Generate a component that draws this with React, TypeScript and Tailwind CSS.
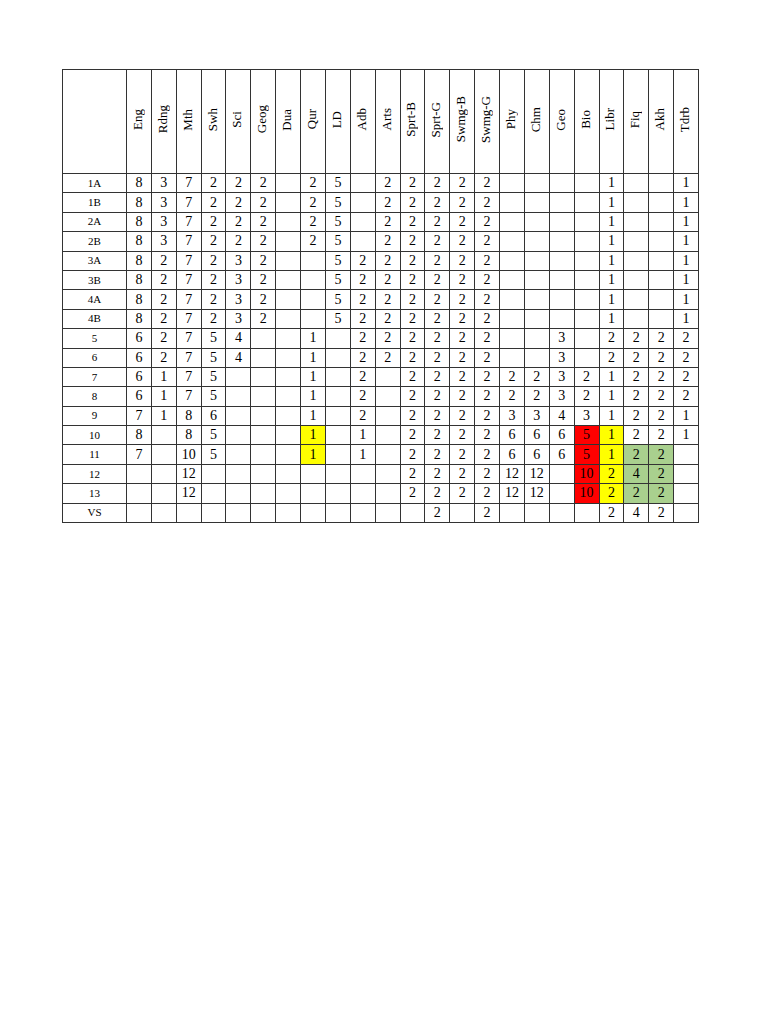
import React from 'react';

const subjects = [
  'Eng', 'Rdng', 'Mth', 'Swh', 'Sci', 'Geog', 'Dua', 'Qur', 'LD', 'Adb', 'Arts',
  'Sprt-B', 'Sprt-G', 'Swmg-B', 'Swmg-G', 'Phy', 'Chm', 'Geo', 'Bio', 'Libr', 'Fiq', 'Akh', 'Tdrb',
];

// y = yellow, r = red, g = green
type Cell = string | [string, 'y' | 'r' | 'g'];

const rowA: Cell[] = ['8', '3', '7', '2', '2', '2', '', '2', '5', '', '2', '2', '2', '2', '2', '', '', '', '', '1', '', '', '1'];
const rowB: Cell[] = ['8', '2', '7', '2', '3', '2', '', '', '5', '2', '2', '2', '2', '2', '2', '', '', '', '', '1', '', '', '1'];
const rowC: Cell[] = ['6', '2', '7', '5', '4', '', '', '1', '', '2', '2', '2', '2', '2', '2', '', '', '3', '', '2', '2', '2', '2'];
const rowD: Cell[] = ['6', '1', '7', '5', '', '', '', '1', '', '2', '', '2', '2', '2', '2', '2', '2', '3', '2', '1', '2', '2', '2'];

const rows: { label: string; cells: Cell[] }[] = [
  { label: '1A', cells: rowA },
  { label: '1B', cells: rowA },
  { label: '2A', cells: rowA },
  { label: '2B', cells: rowA },
  { label: '3A', cells: rowB },
  { label: '3B', cells: rowB },
  { label: '4A', cells: rowB },
  { label: '4B', cells: rowB },
  { label: '5', cells: rowC },
  { label: '6', cells: rowC },
  { label: '7', cells: rowD },
  { label: '8', cells: rowD },
  { label: '9', cells: ['7', '1', '8', '6', '', '', '', '1', '', '2', '', '2', '2', '2', '2', '3', '3', '4', '3', '1', '2', '2', '1'] },
  { label: '10', cells: ['8', '', '8', '5', '', '', '', ['1', 'y'], '', '1', '', '2', '2', '2', '2', '6', '6', '6', ['5', 'r'], ['1', 'y'], '2', '2', '1'] },
  { label: '11', cells: ['7', '', '10', '5', '', '', '', ['1', 'y'], '', '1', '', '2', '2', '2', '2', '6', '6', '6', ['5', 'r'], ['1', 'y'], ['2', 'g'], ['2', 'g'], ''] },
  { label: '12', cells: ['', '', '12', '', '', '', '', '', '', '', '', '2', '2', '2', '2', '12', '12', '', ['10', 'r'], ['2', 'y'], ['4', 'g'], ['2', 'g'], ''] },
  { label: '13', cells: ['', '', '12', '', '', '', '', '', '', '', '', '2', '2', '2', '2', '12', '12', '', ['10', 'r'], ['2', 'y'], ['2', 'g'], ['2', 'g'], ''] },
  { label: 'VS', cells: ['', '', '', '', '', '', '', '', '', '', '', '', '2', '', '2', '', '', '', '', '2', '4', '2', ''] },
];

const fills = {
  y: 'bg-[#ffff00]',
  r: 'bg-[#ff0000]',
  g: 'bg-[#a9d08e]',
};

const cellBase = 'border-r border-b border-[#333] flex items-center justify-center';

export default function App() {
  return (
    <div className="min-h-screen w-full bg-white pt-[69px] pl-[62px] font-['Liberation_Serif',serif] text-black">
      <div className="grid w-[637px] h-[454px] grid-cols-[64px_repeat(23,minmax(0,1fr))] grid-rows-[104px_repeat(18,minmax(0,1fr))] border-t border-l border-[#333]">
        <div className={cellBase} />
        {subjects.map(s => (
          <div key={s} className={`${cellBase} pb-[4px]`}>
            <span className="[writing-mode:vertical-rl] rotate-180 text-[13px] leading-none pl-[3px]">{s}</span>
          </div>
        ))}
        {rows.map(row => (
          <React.Fragment key={row.label}>
            <div className={`${cellBase} text-[11px] leading-none`}>{row.label}</div>
            {row.cells.map((c, i) => {
              const value = typeof c === 'string' ? c : c[0];
              const fill = typeof c === 'string' ? '' : fills[c[1]];
              return (
                <div key={i} className={`${cellBase} ${fill} text-[14px] leading-none`}>
                  {value}
                </div>
              );
            })}
          </React.Fragment>
        ))}
      </div>
    </div>
  );
}
